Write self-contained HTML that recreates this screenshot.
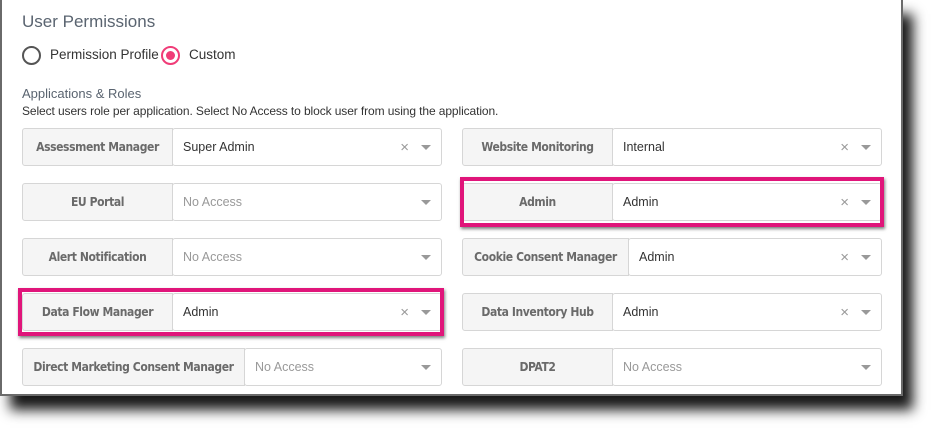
<!DOCTYPE html>
<html><head><style>
*{box-sizing:border-box;margin:0;padding:0}
body{width:935px;height:429px;background:#fff;position:relative;overflow:hidden;font-family:"Liberation Sans",sans-serif}
.panel{position:absolute;left:0;top:0;width:903px;height:396px;background:#fff;border:2px solid #6a6a6a;border-top:none;box-shadow:10px 14px 12px rgba(0,0,0,.9)}
.t{position:absolute;color:#5a6470}
.lab{position:absolute;height:38px;background:#f5f5f5;border:1px solid #d6d6d6;border-radius:3px 0 0 3px;font-weight:bold;font-size:12px;color:#6a6a6a;display:flex;align-items:center;justify-content:center;font-family:"DejaVu Sans Condensed","Liberation Sans",sans-serif;letter-spacing:-.4px;white-space:nowrap}
.sel{position:absolute;height:38px;background:#fff;border:1px solid #d6d6d6;border-radius:3px;font-size:12.5px;color:#333;display:flex;align-items:center;padding-left:10px}
.sel.na{color:#999}
.x{position:absolute;right:32px;top:10px;color:#999;font-size:15px}
.ar{position:absolute;right:10px;top:16px;width:0;height:0;border-left:5px solid transparent;border-right:5px solid transparent;border-top:5px solid #999}
.hl{position:absolute;border:4px solid #e0157a;box-shadow:1px 2px 3px rgba(0,0,0,.5)}
.rad{position:absolute;width:19px;height:19px;border-radius:50%}
</style></head><body>
<div class="panel"></div>
<div class="t" style="left:22px;top:12px;font-size:17px">User Permissions</div>
<div class="rad" style="left:22px;top:46px;border:2px solid #555"></div>
<div class="t" style="left:50px;top:47px;font-size:13.5px;color:#333">Permission Profile</div>
<div class="rad" style="left:161px;top:46px;border:2px solid #f03c78"></div>
<div class="rad" style="left:166px;top:51px;width:9px;height:9px;background:#f03c78"></div>
<div class="t" style="left:189px;top:47px;font-size:13.5px;color:#333">Custom</div>
<div class="t" style="left:22px;top:86px;font-size:13px">Applications &amp; Roles</div>
<div class="t" style="left:22px;top:104px;font-size:12px;color:#333;letter-spacing:-.1px">Select users role per application. Select No Access to block user from using the application.</div>

<div class="lab" style="left:22px;top:128px;width:151px">Assessment Manager</div>
<div class="sel" style="left:172px;top:128px;width:270px">Super Admin<span class="x">×</span><span class="ar"></span></div>
<div class="lab" style="left:462px;top:128px;width:151px">Website Monitoring</div>
<div class="sel" style="left:612px;top:128px;width:270px">Internal<span class="x">×</span><span class="ar"></span></div>

<div class="lab" style="left:22px;top:183px;width:151px">EU Portal</div>
<div class="sel na" style="left:172px;top:183px;width:270px">No Access<span class="ar"></span></div>
<div class="lab" style="left:462px;top:183px;width:151px">Admin</div>
<div class="sel" style="left:612px;top:183px;width:270px">Admin<span class="x">×</span><span class="ar"></span></div>

<div class="lab" style="left:22px;top:238px;width:151px">Alert Notification</div>
<div class="sel na" style="left:172px;top:238px;width:270px">No Access<span class="ar"></span></div>
<div class="lab" style="left:462px;top:238px;width:167px">Cookie Consent Manager</div>
<div class="sel" style="left:628px;top:238px;width:254px">Admin<span class="x">×</span><span class="ar"></span></div>

<div class="lab" style="left:22px;top:293px;width:151px">Data Flow Manager</div>
<div class="sel" style="left:172px;top:293px;width:270px">Admin<span class="x">×</span><span class="ar"></span></div>
<div class="lab" style="left:462px;top:293px;width:151px">Data Inventory Hub</div>
<div class="sel" style="left:612px;top:293px;width:270px">Admin<span class="x">×</span><span class="ar"></span></div>

<div class="lab" style="left:22px;top:348px;width:223px">Direct Marketing Consent Manager</div>
<div class="sel na" style="left:244px;top:348px;width:198px">No Access<span class="ar"></span></div>
<div class="lab" style="left:462px;top:348px;width:151px">DPAT2</div>
<div class="sel na" style="left:612px;top:348px;width:270px">No Access<span class="ar"></span></div>

<div class="hl" style="left:18px;top:288px;width:426px;height:48px"></div>
<div class="hl" style="left:460px;top:177px;width:424px;height:50px"></div>
</body></html>
